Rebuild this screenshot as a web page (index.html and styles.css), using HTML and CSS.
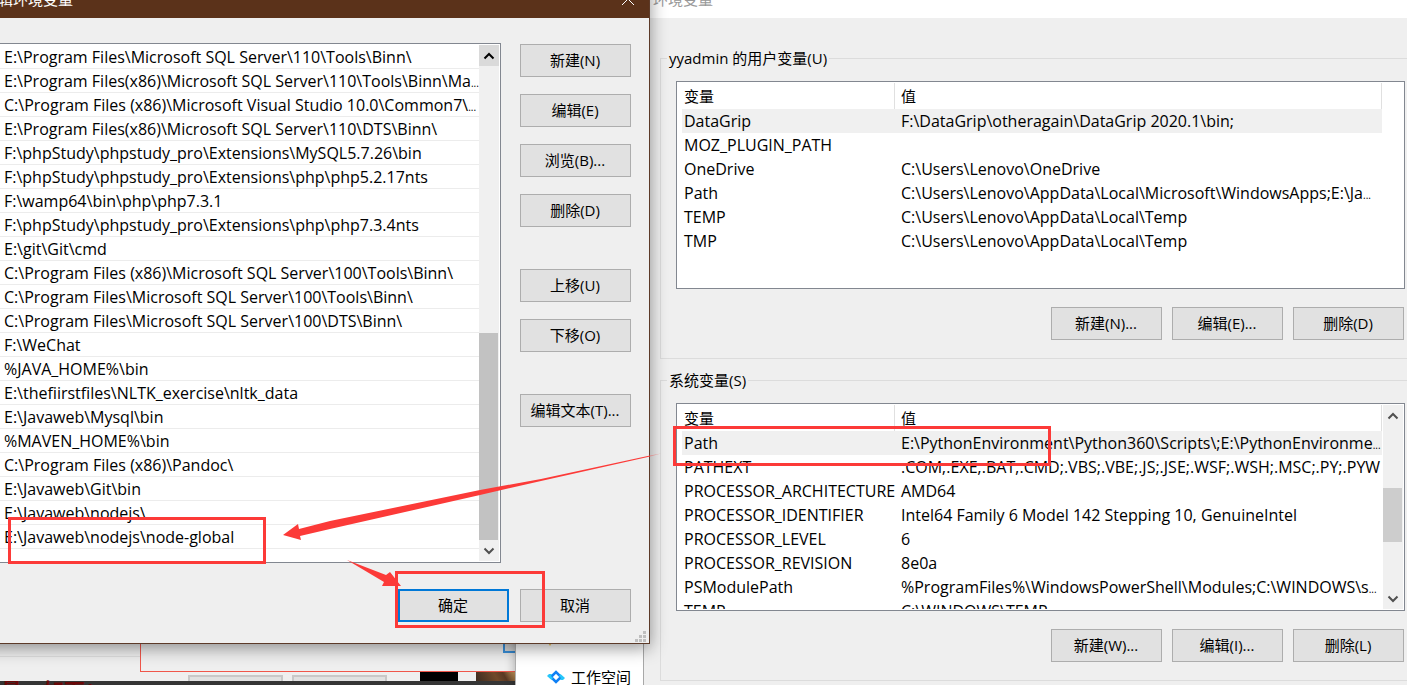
FILE: index.html
```
<!DOCTYPE html>
<html lang="zh-CN">
<head>
<meta charset="utf-8">
<title>编辑环境变量</title>
<link rel="stylesheet" href="styles.css">
</head>
<body>
<main class="desktop">
  <section class="backdrop">
    <div class="backdrop-rule"></div>
    <div class="backdrop-frame"></div>
    <div class="backdrop-button first"></div>
    <div class="backdrop-button second"></div>
    <div class="backdrop-black"></div>
    <div class="backdrop-photo"></div>
    <div class="backdrop-focus"></div>
    <div class="backdrop-strip"><span>变量，如下：</span></div>
  </section>

  <aside class="menu">
    <svg class="menu-star" width="6" height="4" viewBox="0 0 6 4"><path d="M1 0H5L3 3Z" fill="#f7cf62"/></svg>
    <svg class="menu-icon" width="18" height="14" viewBox="0 0 18 14">
      <path d="M4 7 9 2 14 7 9 12Z" fill="none" stroke="#0f80f5" stroke-width="2.600"/>
      <path d="M0 6 2 4H5L4 6 6 8 4.500 10Z" fill="#26c6fa"/>
      <path d="M18 8 16 10H13L14 8 12 6 13.500 4Z" fill="#26c6fa"/>
      <path d="M9 4.500 11.500 7 9 9.500 6.500 7Z" fill="#fff"/>
    </svg>
    <span>工作空间</span>
  </aside>

  <section class="window variables">
    <header class="titlebar"><span>环境变量</span></header>
    <div class="variables-body">
      <fieldset class="group">
        <legend>yyadmin 的用户变量(U)</legend>
        <div class="list">
          <div class="list-view">
            <table class="grid">
              <colgroup><col class="col-name"><col></colgroup>
              <thead><tr><th>变量</th><th>值</th></tr></thead>
              <tbody>
                <tr class="selected"><td>DataGrip</td><td>F:\DataGrip\otheragain\DataGrip 2020.1\bin;</td></tr>
                <tr><td>MOZ_PLUGIN_PATH</td><td></td></tr>
                <tr><td>OneDrive</td><td>C:\Users\Lenovo\OneDrive</td></tr>
                <tr><td>Path</td><td>C:\Users\Lenovo\AppData\Local\Microsoft\WindowsApps;E:\Ja<span class="more">...</span></td></tr>
                <tr><td>TEMP</td><td>C:\Users\Lenovo\AppData\Local\Temp</td></tr>
                <tr><td>TMP</td><td>C:\Users\Lenovo\AppData\Local\Temp</td></tr>
              </tbody>
            </table>
          </div>
          <div class="scroll-space"></div>
        </div>
        <div class="actions">
          <button type="button">新建(N)...</button>
          <button type="button">编辑(E)...</button>
          <button type="button">删除(D)</button>
        </div>
      </fieldset>

      <fieldset class="group">
        <legend>系统变量(S)</legend>
        <div class="list">
          <div class="list-view">
            <table class="grid">
              <colgroup><col class="col-name"><col></colgroup>
              <thead><tr><th>变量</th><th>值</th></tr></thead>
              <tbody>
                <tr class="selected"><td>Path</td><td>E:\PythonEnvironment\Python360\Scripts\;E:\PythonEnvironme<span class="more">...</span></td></tr>
                <tr><td>PATHEXT</td><td>.COM;.EXE;.BAT;.CMD;.VBS;.VBE;.JS;.JSE;.WSF;.WSH;.MSC;.PY;.PYW</td></tr>
                <tr><td>PROCESSOR_ARCHITECTURE</td><td>AMD64</td></tr>
                <tr><td>PROCESSOR_IDENTIFIER</td><td>Intel64 Family 6 Model 142 Stepping 10, GenuineIntel</td></tr>
                <tr><td>PROCESSOR_LEVEL</td><td>6</td></tr>
                <tr><td>PROCESSOR_REVISION</td><td>8e0a</td></tr>
                <tr><td>PSModulePath</td><td>%ProgramFiles%\WindowsPowerShell\Modules;C:\WINDOWS\s<span class="more">...</span></td></tr>
                <tr><td>TEMP</td><td>C:\WINDOWS\TEMP</td></tr>
              </tbody>
            </table>
          </div>
          <div class="scrollbar">
            <div class="scroll-arrow"><svg width="12" height="8" viewBox="0 0 12 8"><path d="M1.500 6.500 6 2 10.500 6.500"/></svg></div>
            <div class="scroll-track middle"><div class="scroll-thumb"></div></div>
            <div class="scroll-arrow"><svg width="12" height="8" viewBox="0 0 12 8"><path d="M1.500 1.500 6 6 10.500 1.500"/></svg></div>
          </div>
        </div>
        <div class="actions">
          <button type="button">新建(W)...</button>
          <button type="button">编辑(I)...</button>
          <button type="button">删除(L)</button>
        </div>
      </fieldset>
    </div>
  </section>

  <section class="window editor">
    <header class="titlebar">
      <span>编辑环境变量</span>
      <button type="button" class="close" aria-label="关闭"><svg width="14" height="14" viewBox="0 0 14 14"><path d="M1 1 13 13M13 1 1 13"/></svg></button>
    </header>
    <div class="editor-body">
      <div class="list paths">
        <ul class="path-rows">
          <li>E:\Program Files\Microsoft SQL Server\110\Tools\Binn\</li>
          <li>E:\Program Files(x86)\Microsoft SQL Server\110\Tools\Binn\Ma<span class="more">...</span></li>
          <li>C:\Program Files (x86)\Microsoft Visual Studio 10.0\Common7\<span class="more">...</span></li>
          <li>E:\Program Files(x86)\Microsoft SQL Server\110\DTS\Binn\</li>
          <li>F:\phpStudy\phpstudy_pro\Extensions\MySQL5.7.26\bin</li>
          <li>F:\phpStudy\phpstudy_pro\Extensions\php\php5.2.17nts</li>
          <li>F:\wamp64\bin\php\php7.3.1</li>
          <li>F:\phpStudy\phpstudy_pro\Extensions\php\php7.3.4nts</li>
          <li>E:\git\Git\cmd</li>
          <li>C:\Program Files (x86)\Microsoft SQL Server\100\Tools\Binn\</li>
          <li>C:\Program Files\Microsoft SQL Server\100\Tools\Binn\</li>
          <li>C:\Program Files\Microsoft SQL Server\100\DTS\Binn\</li>
          <li>F:\WeChat</li>
          <li>%JAVA_HOME%\bin</li>
          <li>E:\thefiirstfiles\NLTK_exercise\nltk_data</li>
          <li>E:\Javaweb\Mysql\bin</li>
          <li>%MAVEN_HOME%\bin</li>
          <li>C:\Program Files (x86)\Pandoc\</li>
          <li>E:\Javaweb\Git\bin</li>
          <li>E:\Javaweb\nodejs\</li>
          <li>E:\Javaweb\nodejs\node-global</li>
        </ul>
        <div class="scrollbar">
          <div class="scroll-arrow active"><svg width="12" height="8" viewBox="0 0 12 8"><path d="M1.500 6.500 6 2 10.500 6.500"/></svg></div>
          <div class="scroll-track bottom"><div class="scroll-thumb"></div></div>
          <div class="scroll-arrow"><svg width="12" height="8" viewBox="0 0 12 8"><path d="M1.500 1.500 6 6 10.500 1.500"/></svg></div>
        </div>
      </div>
      <div class="commands">
        <button type="button">新建(N)</button>
        <button type="button">编辑(E)</button>
        <button type="button">浏览(B)...</button>
        <button type="button">删除(D)</button>
        <button type="button" class="spaced">上移(U)</button>
        <button type="button">下移(O)</button>
        <button type="button" class="spaced">编辑文本(T)...</button>
      </div>
    </div>
    <footer class="editor-footer">
      <button type="button" class="default">确定</button>
      <button type="button">取消</button>
    </footer>
    <svg class="grip" width="11" height="11" viewBox="0 0 11 11"><path d="M8 0h3v3H8zM4 4h3v3H4zM8 4h3v3H8zM0 8h3v3H0zM4 8h3v3H4zM8 8h3v3H8z" fill="#bfbfbf"/></svg>
  </section>

  <svg class="marks" width="1407" height="685" viewBox="0 0 1407 685">
    <g fill="none" stroke="#fc3a38" stroke-width="3">
      <rect x="9.500" y="518.500" width="255" height="44"/>
      <rect x="396.500" y="572.500" width="147" height="54"/>
      <rect x="674.500" y="427.500" width="375" height="37"/>
    </g>
    <g fill="#fc3a38">
      <path d="M283 535 298 524 299 529 330 521 480 490 541 479 650 455.500 650 456.500 541 481 480 495 330 529 300 536 301 540Z"/>
      <path d="M650 455.500 661 453.500 650 456.500Z" opacity=".4"/>
      <path d="M347 560 386 575 390 572 401 586 382 586 384 582Z"/>
    </g>
  </svg>
</main>
</body>
</html>
```

FILE: styles.css
```
* { box-sizing: border-box; }

body {
  margin: 0;
  font: 15px/20px "Open Sans", "Noto Sans CJK SC", sans-serif;
  color: #000;
}

.desktop {
  position: relative;
  height: 100vh;
  overflow: hidden;
  background: #efefef;
}

button {
  width: 111px;
  height: 33px;
  padding: 0 1px 2px 0;
  border: 1px solid #adadad;
  background: #e1e1e1;
  color: #000;
  font: inherit;
  white-space: nowrap;
}

button.default { border: 2px solid #0078d7; }

/* Windows */
.window {
  position: absolute;
  top: -20px;
  background: #efefef;
}

.titlebar {
  display: flex;
  align-items: center;
  justify-content: space-between;
  height: 38px;
}

.editor {
  left: -30px;
  width: 680px;
  border: 1px solid #5c3a28;
  border-top: 0;
  box-shadow: 0 4px 16px rgba(0, 0, 0, .42);
}

.editor .titlebar {
  padding: 0 14px 0 12px;
  background: #5b321a;
  color: #fff;
}

.close {
  width: 14px;
  height: 14px;
  padding: 0;
  border: 0;
  background: none;
}

.close svg { display: block; }
.close path { fill: none; stroke: #fff; }

.editor-body {
  display: flex;
  gap: 19px;
  padding: 25px 18px 0 20px;
}

.editor-footer {
  display: flex;
  justify-content: flex-end;
  gap: 11px;
  padding: 26px 18px 21px;
}

.grip {
  position: absolute;
  right: 3px;
  bottom: 1px;
}

.commands {
  display: flex;
  flex-direction: column;
  gap: 17px;
  padding-top: 1px;
}

.commands .spaced { margin-top: 25px; }

/* Lists */
.list {
  display: flex;
  border: 1px solid #828790;
  background: #fff;
  padding: 1px;
}

.paths { flex: 1; min-width: 0; }

.path-rows {
  flex: 1;
  min-width: 0;
  margin: 0;
  padding: 0 0 12px;
  list-style: none;
  font-size: 16px;
}

.path-rows li {
  height: 24px;
  padding-left: 11px;
  border-bottom: 1px solid #ececec;
  line-height: 24px;
  white-space: nowrap;
  overflow: hidden;
}

.more { font-size: 10px; line-height: 1; }

.list-view {
  flex: 1;
  min-width: 0;
  padding-left: 4px;
  overflow: hidden;
}

.grid {
  width: 100%;
  table-layout: fixed;
  border-collapse: separate;
  border-spacing: 0;
}

.col-name { width: 213px; }

.grid th,
.grid td {
  height: 24px;
  padding: 0 0 0 2px;
  line-height: 24px;
  font-weight: normal;
  text-align: left;
  white-space: nowrap;
}

.grid td { font-size: 16px; }
.grid td .more { font-size: 10px; }

.grid th {
  height: 26px;
  border-right: 1px solid #e0e0e0;
}

.grid th + th,
.grid td + td { padding-left: 6px; }

.selected td { background: #f0f0f0; }

.scroll-space { width: 21px; }

.scrollbar {
  display: flex;
  flex-direction: column;
  width: 20px;
  background: #f0f0f0;
}

.group .scrollbar { margin-left: 1px; }

.scroll-arrow {
  display: flex;
  align-items: center;
  justify-content: center;
  height: 21px;
  padding-right: 1px;
}

.scroll-arrow.active { background: #dadada; }
.scroll-arrow path { fill: none; stroke: #505050; stroke-width: 2; }
.scroll-arrow.active path { stroke: #000; }

.scroll-track {
  display: flex;
  flex-direction: column;
  flex: 1;
  padding-right: 1px;
}

.scroll-track.bottom { justify-content: flex-end; }
.scroll-track.bottom .scroll-thumb { height: 207px; background: #c2c2c2; }
.scroll-track.middle { padding-top: 62px; }
.scroll-thumb { height: 54px; background: #cdcdcd; }

/* Environment variables window */
.variables {
  left: 643px;
  right: -20px;
  bottom: -20px;
  border-left: 1px solid #a8a8a8;
}

.variables .titlebar {
  padding-left: 9px;
  background: #fff;
  color: #999;
}

.variables-body {
  display: flex;
  flex-direction: column;
  gap: 11px;
  padding: 30px 6px 0 16px;
}

.group {
  min-width: 0;
  margin: 0;
  padding: 13px 15px 18px;
  border: 1px solid #dcdcdc;
}

.group legend {
  margin-left: -9px;
  padding: 0 2px;
}

.group .list { height: 208px; }

.actions {
  display: flex;
  justify-content: flex-end;
  gap: 10px;
  margin-top: 18px;
  padding-right: 1px;
}

/* Surface behind the windows */
.backdrop div { position: absolute; }
.backdrop-rule { left: 0; top: 656px; width: 140px; height: 1px; background: #ddd; }
.backdrop-frame { left: 140px; top: 600px; width: 380px; height: 72px; border: 1px solid #f0564a; }
.backdrop-button { top: 675px; width: 95px; height: 10px; border: 2px solid #c8c8c8; background: #e1e1e1; }
.backdrop-button.first { left: 188px; }
.backdrop-button.second { left: 292px; }
.backdrop-black { left: 420px; top: 672px; width: 38px; height: 10px; background: #000; }
.backdrop-photo { left: 476px; top: 672px; width: 40px; height: 10px; background: linear-gradient(60deg, #3b2a20, #70482a 50%, #5a3823 70%, #d0a060); }
.backdrop-focus { left: 503px; top: 630px; width: 20px; height: 23px; border: 2px solid #3a92dd; background: #ddd; }
.backdrop .backdrop-strip {
  left: -20px;
  right: 0;
  top: 681px;
  height: 24px;
  background: #353535;
  color: #6a0808;
  font-size: 21px;
  font-weight: bold;
  line-height: 18px;
}

.menu {
  position: absolute;
  left: 515px;
  top: 620px;
  display: flex;
  align-items: center;
  gap: 6px;
  width: 128px;
  padding: 47px 0 20px 31px;
  border-left: 1px solid #b0b0b0;
  background: #fff;
  box-shadow: 0 0 10px rgba(0, 0, 0, .3);
}

.menu-star {
  position: absolute;
  left: 31px;
  top: 23px;
}

.marks {
  position: absolute;
  left: 0;
  top: 0;
  pointer-events: none;
}
```
